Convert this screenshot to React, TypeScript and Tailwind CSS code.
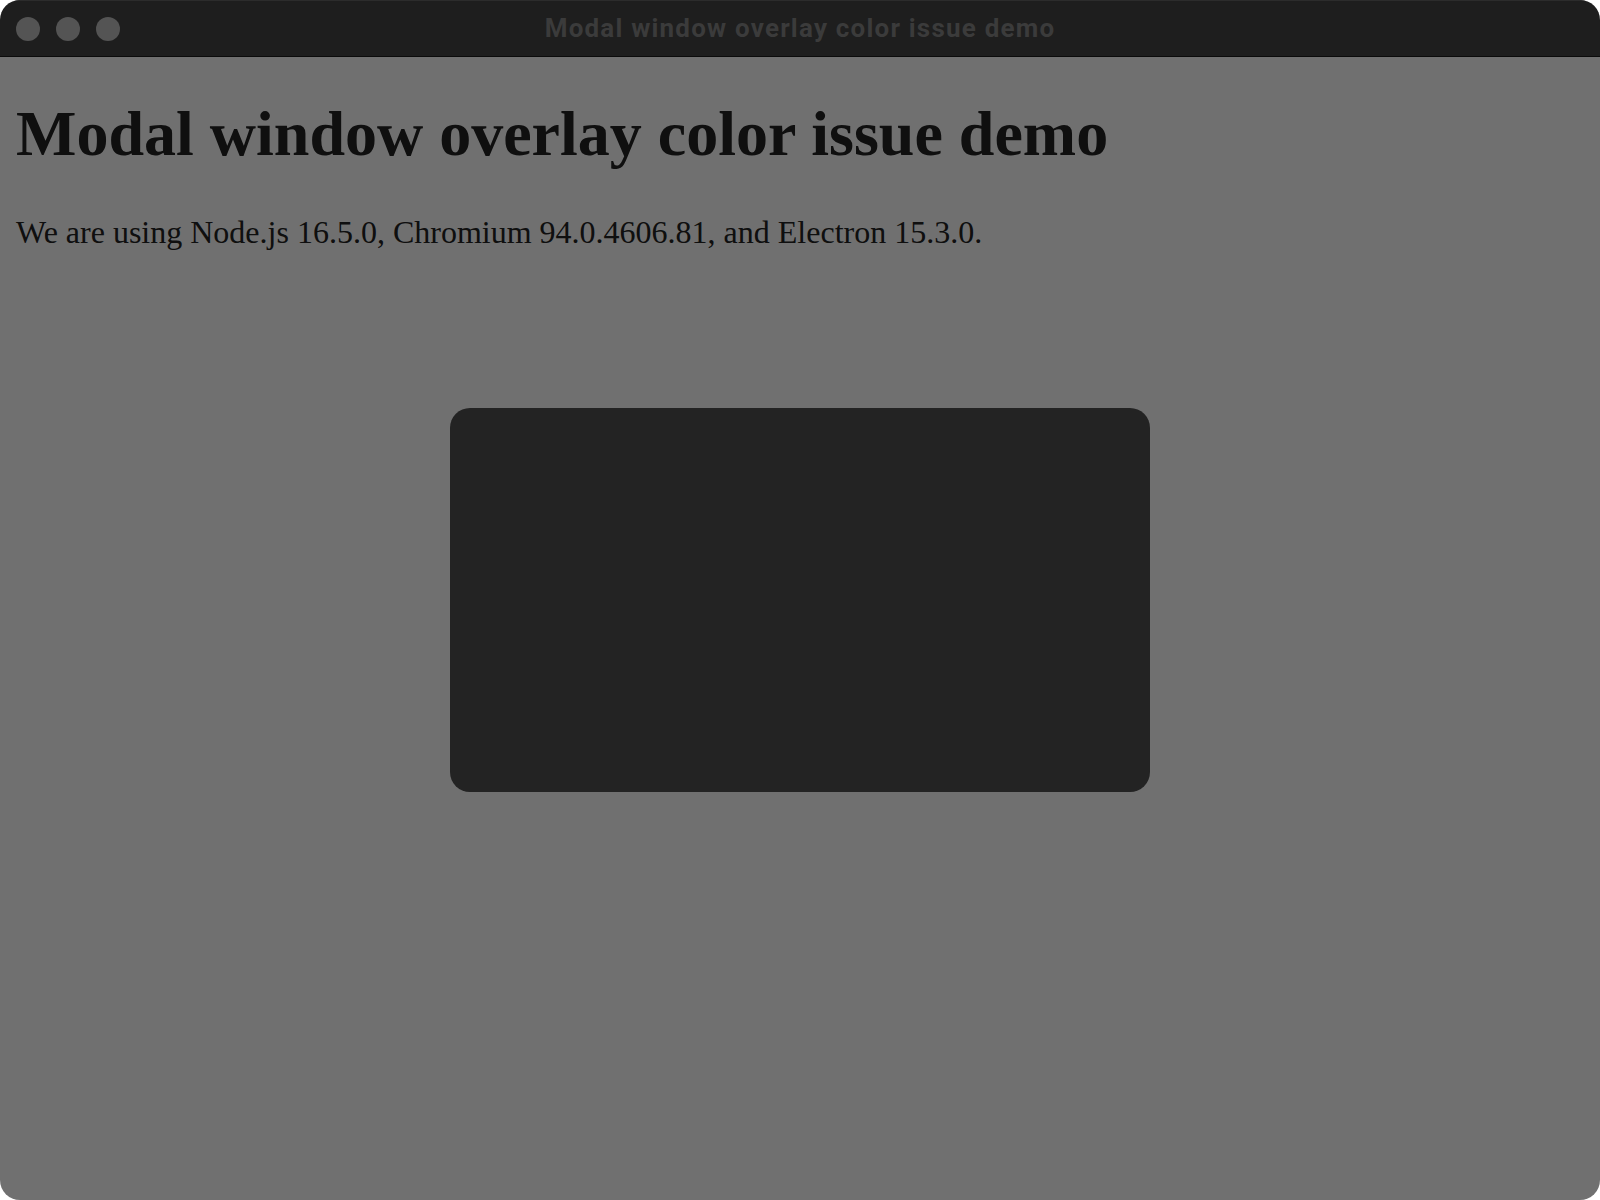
export default function App() {
    return (
        <div className="h-[1200px] w-full bg-white">
            <div className="flex h-full flex-col overflow-hidden rounded-[20px]">
                {/* title bar */}
                <div className="relative flex h-[57px] shrink-0 items-center border-t border-b border-t-[#2c2c2c] border-b-[#0b0b0b] bg-[#1e1e1e]">
                    <div className="flex gap-4 pl-4">
                        <span className="h-6 w-6 rounded-full bg-[#545454]" />
                        <span className="h-6 w-6 rounded-full bg-[#545454]" />
                        <span className="h-6 w-6 rounded-full bg-[#545454]" />
                    </div>
                    <div className="absolute inset-0 flex items-center justify-center font-['Roboto',sans-serif] text-[26px] font-bold tracking-[1.2px] text-[#3b3b3b]">
                        Modal window overlay color issue demo
                    </div>
                </div>

                {/* page */}
                <div className="relative flex-1 bg-white px-4 font-['Liberation_Serif',serif] text-[#222]">
                    <h1 className="mt-[40px] mb-[43px] text-[64px] font-bold leading-[1.15]">Modal window overlay color issue demo</h1>
                    <p className="text-[32px] leading-[1.15]">We are using Node.js 16.5.0, Chromium 94.0.4606.81, and Electron 15.3.0.</p>

                    {/* overlay + modal */}
                    <div className="absolute inset-0 flex flex-col items-center bg-black/[0.56]">
                        <div className="mt-[351px] h-[384px] w-[700px] rounded-[20px] bg-[#232323]" />
                    </div>
                </div>
            </div>
        </div>
    );
}
